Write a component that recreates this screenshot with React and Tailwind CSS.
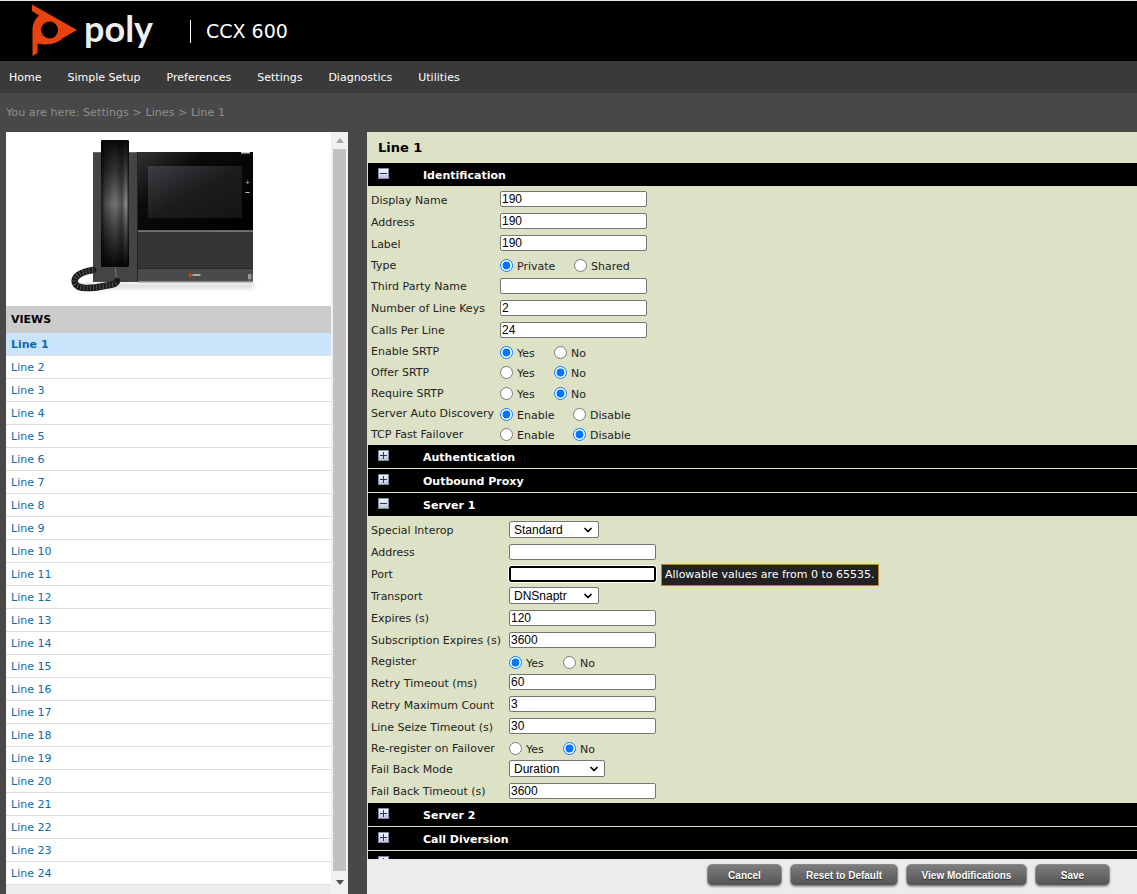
import { ChevronDown } from 'lucide-react';

const navItems = ['Home', 'Simple Setup', 'Preferences', 'Settings', 'Diagnostics', 'Utilities'];
const lines = Array.from({ length: 24 }, (_, i) => `Line ${i + 1}`);

const identification = [
    { label: 'Display Name', value: '190' },
    { label: 'Address', value: '190' },
    { label: 'Label', value: '190' },
    { label: 'Type', options: ['Private', 'Shared'], checked: 0, first: 'w-[74px]' },
    { label: 'Third Party Name', value: '' },
    { label: 'Number of Line Keys', value: '2' },
    { label: 'Calls Per Line', value: '24' },
    { label: 'Enable SRTP', options: ['Yes', 'No'], checked: 0, first: 'w-[54px]' },
    { label: 'Offer SRTP', options: ['Yes', 'No'], checked: 1, first: 'w-[54px]' },
    { label: 'Require SRTP', options: ['Yes', 'No'], checked: 1, first: 'w-[54px]' },
    { label: 'Server Auto Discovery', options: ['Enable', 'Disable'], checked: 0, first: 'w-[73px]' },
    { label: 'TCP Fast Failover', options: ['Enable', 'Disable'], checked: 1, first: 'w-[73px]' },
];

const server1 = [
    { label: 'Special Interop', select: 'Standard', width: 'w-[90px]' },
    { label: 'Address', value: '' },
    { label: 'Port', value: '', focused: true },
    { label: 'Transport', select: 'DNSnaptr', width: 'w-[90px]' },
    { label: 'Expires (s)', value: '120' },
    { label: 'Subscription Expires (s)', value: '3600' },
    { label: 'Register', options: ['Yes', 'No'], checked: 0, first: 'w-[54px]' },
    { label: 'Retry Timeout (ms)', value: '60' },
    { label: 'Retry Maximum Count', value: '3' },
    { label: 'Line Seize Timeout (s)', value: '30' },
    { label: 'Re-register on Failover', options: ['Yes', 'No'], checked: 1, first: 'w-[54px]' },
    { label: 'Fail Back Mode', select: 'Duration', width: 'w-[96px]' },
    { label: 'Fail Back Timeout (s)', value: '3600' },
];

function PolyLogo() {
    return (
        <svg width="52" height="60" viewBox="0 0 52 60" className="shrink-0">
            <path
                fillRule="evenodd"
                fill="#e8420f"
                d="M7 3.500 L52 29 L38 37 C33 42.500 22 45 12.500 42.500 L12.500 52 L7.500 55 L7.500 29 C7.500 23 10 18 14 14.500 L7 10 Z M24.500 20.500 A8.500 8.500 0 1 0 24.600 37.500 A8.500 8.500 0 1 0 24.500 20.500 Z"
            />
        </svg>
    );
}

function PhoneImage() {
    return (
        <svg width="190" height="165" viewBox="0 0 190 165">
            <defs>
                <linearGradient id="handset" x1="0" x2="1" y1="0" y2="0">
                    <stop offset="0" stopColor="#1c1c1c" />
                    <stop offset="0.15" stopColor="#555" />
                    <stop offset="0.5" stopColor="#8a8a8a" />
                    <stop offset="0.75" stopColor="#5a5a5a" />
                    <stop offset="0.9" stopColor="#a8a8a8" />
                    <stop offset="1" stopColor="#1c1c1c" />
                </linearGradient>
                <linearGradient id="handsetShade" x1="0" x2="0" y1="0" y2="1">
                    <stop offset="0" stopColor="#000" stopOpacity="0.92" />
                    <stop offset="0.25" stopColor="#000" stopOpacity="0.6" />
                    <stop offset="0.5" stopColor="#000" stopOpacity="0.15" />
                    <stop offset="0.75" stopColor="#000" stopOpacity="0.6" />
                    <stop offset="1" stopColor="#000" stopOpacity="0.95" />
                </linearGradient>
                <linearGradient id="bezel" x1="0" x2="1" y1="0" y2="0.8">
                    <stop offset="0" stopColor="#333" />
                    <stop offset="0.35" stopColor="#0b0b0b" />
                    <stop offset="1" stopColor="#000" />
                </linearGradient>
                <linearGradient id="display" x1="0" x2="1" y1="0" y2="1">
                    <stop offset="0" stopColor="#3e3e42" />
                    <stop offset="0.5" stopColor="#1c1c1f" />
                    <stop offset="1" stopColor="#141416" />
                </linearGradient>
                <pattern id="mesh" width="2" height="2" patternUnits="userSpaceOnUse">
                    <rect width="2" height="2" fill="#38383a" />
                    <rect width="1" height="1" fill="#2a2a2c" />
                </pattern>
                <filter id="soft" x="-20%" y="-200%" width="140%" height="500%">
                    <feGaussianBlur stdDeviation="2" />
                </filter>
            </defs>
            <rect x="8" y="149" width="176" height="4" fill="#999" opacity="0.45" filter="url(#soft)" />
            <rect x="23" y="18" width="44" height="129" fill="#444446" />
            <rect x="23" y="17" width="160" height="1" fill="#6a6a6a" />
            <rect x="67" y="17" width="1" height="130" fill="#222" />
            <rect x="68" y="17" width="115" height="78" fill="url(#bezel)" />
            <rect x="78" y="31" width="94" height="52" fill="url(#display)" />
            <rect x="171" y="17" width="9" height="1.500" fill="#cfcfcf" />
            <text x="177.500" y="50" fontSize="7" fill="#ccc" textAnchor="middle" fontFamily="'Liberation Sans', sans-serif">+</text>
            <rect x="175.500" y="57" width="4" height="1" fill="#ccc" />
            <rect x="68" y="95" width="115" height="1.500" fill="#666" />
            <rect x="68" y="96.500" width="115" height="36.500" fill="url(#mesh)" />
            <rect x="68" y="133" width="115" height="14" fill="#4a4a4c" />
            <rect x="68" y="133" width="115" height="1" fill="#2b2b2b" />
            <rect x="68" y="146" width="115" height="1.500" fill="#8a8a8a" />
            <rect x="119" y="138" width="2.500" height="4" fill="#d8401a" />
            <rect x="122.500" y="139" width="8" height="2" fill="#aaa" />
            <path d="M176 146 L183 138 L183 146 Z" fill="#5d5d5f" />
            <rect x="178" y="139" width="3" height="5" fill="#999" />
            <rect x="31" y="5" width="28" height="127" rx="1.500" fill="url(#handset)" />
            <rect x="31" y="5" width="28" height="127" rx="1.500" fill="url(#handsetShade)" />
            <path d="M45 132 L47 147" stroke="#777" strokeWidth="1" fill="none" />
            <path
                d="M23 135 C10 137 3 142 5 148 C7 154 20 154 34 151 C40 150 46 150 47 146"
                fill="none"
                stroke="#1a1a1a"
                strokeWidth="6.500"
                strokeLinecap="round"
            />
            <path
                d="M23 135 C10 137 3 142 5 148 C7 154 20 154 34 151 C40 150 46 150 47 146"
                fill="none"
                stroke="#616161"
                strokeWidth="5"
                strokeDasharray="0.800 2.400"
            />
        </svg>
    );
}

function SectionHeader({ title, open }) {
    return (
        <div className="flex h-6 shrink-0 items-start border-b border-[#dde2c6] bg-black pl-[10px]">
            <span className="mt-[5px] flex h-[11px] w-[11px] shrink-0 items-center justify-center border border-[#7f8ba8] bg-gradient-to-b from-[#f2f5fb] to-[#bcc8de]">
                <span className="relative block h-[1px] w-[7px] bg-[#2c3554]">
                    {!open && <span className="absolute left-[3px] top-[-3px] block h-[7px] w-[1px] bg-[#2c3554]" />}
                </span>
            </span>
            <span className="ml-[34px] mt-[5px] text-[11px] font-bold leading-[16px] text-white">{title}</span>
        </div>
    );
}

function TextInput({ value, focused, width }) {
    return (
        <input
            type="text"
            defaultValue={value}
            className={`block h-4 ${width} rounded-[2px] bg-white px-[1px] font-['Liberation_Sans',Arial,sans-serif] text-[12px] leading-none text-black ${
                focused ? 'border-2 border-black outline outline-1 outline-white' : 'border border-[#767676]'
            }`}
        />
    );
}

function Row({ row, group, labelWidth, inputWidth }) {
    return (
        <div className={`flex items-center pl-[3px] ${row.options ? 'h-[20.6px]' : 'h-[22px]'}`}>
            <label className={`${labelWidth} shrink-0 whitespace-nowrap text-[11px] leading-none text-[#222]`}>{row.label}</label>
            {row.options && (
                <div className="flex items-center pt-[1px]">
                    {row.options.map((opt, i) => (
                        <label key={opt} className={`flex items-center gap-1 text-[11px] leading-none text-[#222] ${i === 0 ? row.first : ''}`}>
                            <input type="radio" name={`${group}-${row.label}`} defaultChecked={i === row.checked} className="h-[13px] w-[13px]" />
                            <span className="pt-[2px]">{opt}</span>
                        </label>
                    ))}
                </div>
            )}
            {row.select && (
                <span className={`relative mb-[2px] block h-[17px] ${row.width}`}>
                    <select className="block h-[17px] w-full appearance-none rounded-[2px] border border-[#767676] bg-white pl-1 font-['Liberation_Sans',Arial,sans-serif] text-[12px] leading-none text-black">
                        <option>{row.select}</option>
                    </select>
                    <ChevronDown size={12} strokeWidth={3.500} className="pointer-events-none absolute right-[5px] top-[3px] text-black" />
                </span>
            )}
            {!row.options && !row.select && (
                <span className="relative mb-[2px] block">
                    <TextInput value={row.value} focused={row.focused} width={inputWidth} />
                    {row.focused && (
                        <span className="absolute left-[152px] top-[-2px] whitespace-nowrap border border-[#b3862e] bg-[#222] px-[3px] py-[3px] text-[11px] leading-[14px] text-white">
                            Allowable values are from 0 to 65535.
                        </span>
                    )}
                </span>
            )}
        </div>
    );
}

function FooterButton({ children, width }) {
    return (
        <button className={`h-[22px] ${width} rounded-[5px] border border-[#8a8a8a] bg-gradient-to-b from-[#7d7d7d] to-[#555] font-['Liberation_Sans',Arial,sans-serif] text-[10px] font-bold text-white shadow-[0_1px_2px_rgba(0,0,0,0.35)] [text-shadow:0_1px_1px_rgba(0,0,0,0.7)]`}>
            {children}
        </button>
    );
}

export default function App() {
    return (
        <div className="flex h-screen flex-col overflow-hidden bg-[#484848] font-['DejaVu_Sans',Verdana,sans-serif]">
            {/* Cabecera */}
            <div className="h-[1px] shrink-0 bg-[#e8e8e8]" />
            <header className="flex h-[60px] shrink-0 items-center bg-black pl-[25px]">
                <PolyLogo />
                <span className="ml-[7px] mt-[-6px] w-[70px] font-['Lato',sans-serif] text-[36px] font-bold leading-none text-[#efefef]">poly</span>
                <span className="ml-[36px] h-[23px] w-[1px] bg-white" />
                <span className="ml-[15px] text-[19px] leading-none text-white">CCX 600</span>
            </header>
            <nav className="flex h-8 shrink-0 items-center gap-[26px] bg-[#3a3a3a] pl-[9px] pt-[2px] text-[11px] text-white">
                {navItems.map(item => (
                    <span key={item}>{item}</span>
                ))}
            </nav>
            <div className="flex h-[39px] shrink-0 items-start pl-[6px] pt-[13px] text-[11.2px] leading-[14px] text-[#8f8f8f]">
                You are here: Settings &gt; Lines &gt; Line 1
            </div>

            <div className="flex min-h-0 flex-1">
                {/* Panel izquierdo */}
                <aside className="ml-[6px] flex w-[342px] shrink-0 bg-white">
                    <div className="flex w-[325px] shrink-0 flex-col">
                        <div className="flex h-[174px] shrink-0 justify-center overflow-hidden pr-[7px] pt-[3px]">
                            <PhoneImage />
                        </div>
                        <div className="flex h-[27px] shrink-0 items-center bg-[#ccc] pl-[5px] pt-[2px] text-[11px] font-bold text-black">VIEWS</div>
                        {lines.map((line, i) => (
                            <div
                                key={line}
                                className={`flex h-[23px] shrink-0 items-center border-b border-[#ddd] pl-[5px] pt-[2px] text-[11px] text-[#0b6bab] ${
                                    i === 0 ? 'bg-[#cce4fb] font-bold' : 'bg-white'
                                }`}
                            >
                                {line}
                            </div>
                        ))}
                        <div className="flex-1 bg-[#ececec]" />
                    </div>
                    <div className="flex w-[17px] shrink-0 flex-col items-center bg-[#f1f1f1] px-[2px]">
                        <div className="flex h-[17px] items-center justify-center">
                            <span className="block h-0 w-0 border-x-[4px] border-b-[5px] border-x-transparent border-b-[#a8a8a8]" />
                        </div>
                        <div className="h-[722px] w-full bg-[#c1c1c1]" />
                        <div className="flex flex-1 items-center justify-center">
                            <span className="block h-0 w-0 border-x-[4px] border-t-[5px] border-x-transparent border-t-[#505050]" />
                        </div>
                    </div>
                </aside>

                {/* Panel derecho */}
                <main className="ml-[19px] flex min-w-0 flex-1 flex-col bg-[#dde2c6]">
                    <div className="min-h-0 flex-1 overflow-hidden pl-[1px]">
                        <h1 className="flex h-[31px] items-center pl-[10px] text-[13px] font-bold text-black">Line 1</h1>
                        <SectionHeader title="Identification" open />
                        <div className="pt-[2px]">
                            {identification.map(row => (
                                <Row key={row.label} row={row} group="id" labelWidth="w-[129px]" inputWidth="w-[147px]" />
                            ))}
                        </div>
                        <SectionHeader title="Authentication" />
                        <SectionHeader title="Outbound Proxy" />
                        <SectionHeader title="Server 1" open />
                        <div className="pt-[3px]">
                            {server1.map(row => (
                                <Row key={row.label} row={row} group="s1" labelWidth="w-[138px]" inputWidth="w-[147px]" />
                            ))}
                        </div>
                        <SectionHeader title="Server 2" />
                        <SectionHeader title="Call Diversion" />
                        <SectionHeader title="" />
                    </div>
                    <footer className="flex h-[35px] shrink-0 items-start gap-2 bg-[#ececec] pl-[340px] pt-[5px]">
                        <FooterButton width="w-[75px]">Cancel</FooterButton>
                        <FooterButton width="w-[108px]">Reset to Default</FooterButton>
                        <FooterButton width="w-[121px]">View Modifications</FooterButton>
                        <FooterButton width="w-[75px]">Save</FooterButton>
                    </footer>
                </main>
            </div>
        </div>
    );
}
